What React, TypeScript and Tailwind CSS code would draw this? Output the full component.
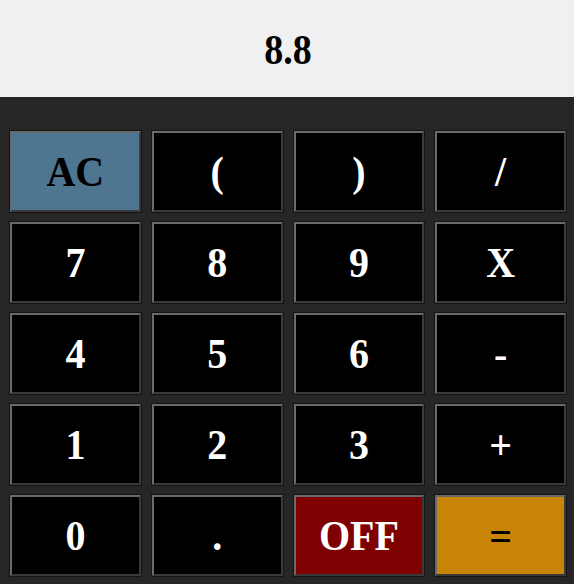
import React from "react";

type Key = { label: string; cls?: string };

const keys: Key[] = [
  { label: "AC", cls: "bg-[#4f7691] text-black" },
  { label: "(" },
  { label: ")" },
  { label: "/" },
  { label: "7" },
  { label: "8" },
  { label: "9" },
  { label: "X" },
  { label: "4" },
  { label: "5" },
  { label: "6" },
  { label: "-" },
  { label: "1" },
  { label: "2" },
  { label: "3" },
  { label: "+" },
  { label: "0" },
  { label: "." },
  { label: "OFF", cls: "bg-[#7f0000] text-white" },
  { label: "=", cls: "bg-[#c88404] text-black" },
];

export default function App() {
  return (
    <div
      className="w-[574px] h-[584px] flex flex-col bg-[#262626]"
      style={{ fontFamily: '"Liberation Serif", "Times New Roman", serif' }}
    >
      <div className="h-[97px] bg-[#f0f0f0] flex items-center justify-center">
        <span className="text-[38px] font-bold text-black leading-none scale-y-[1.12] translate-x-[1px]">8.8</span>
      </div>
      <div className="flex-1 grid grid-cols-4 grid-rows-5 gap-x-[11px] gap-y-[10px] pl-[10px] pr-[8px] pt-[34px] pb-[8px]">
        {keys.map((k, i) => (
          <button
            key={i}
            className={`flex items-center justify-center border-2 border-t-[#6a6a6a] border-l-[#6a6a6a] border-b-[#3a3a3a] border-r-[#3a3a3a] shadow-[0_0_0_1px_#141414] font-bold leading-none ${
              k.cls ?? "bg-black text-white"
            }`}
          >
            <span className="text-[40px] scale-y-[1.07]">{k.label}</span>
          </button>
        ))}
      </div>
    </div>
  );
}
